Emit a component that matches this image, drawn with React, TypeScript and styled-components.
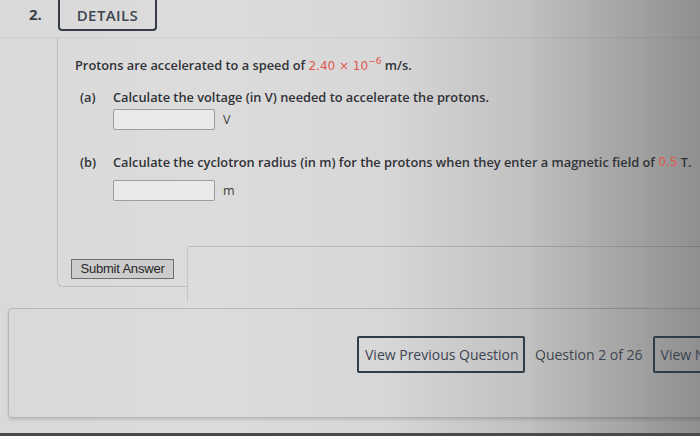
import React from 'react'
import styled, { createGlobalStyle } from 'styled-components'

const Global = createGlobalStyle`
  html, body {
    margin: 0;
    padding: 0;
  }
  body {
    width: 700px;
    height: 436px;
    overflow: hidden;
    font-family: 'Open Sans', 'Noto Sans', sans-serif;
    background: linear-gradient(
      90deg,
      #dad9d9 0%,
      #dddcdc 30%,
      #d8d7d7 55%,
      #c2c1c1 75%,
      #908f8f 100%
    );
  }
`

const Page = styled.div`
  width: 700px;
  height: 436px;
  display: flex;
  flex-direction: column;
  overflow: hidden;
  border-bottom: 3px solid #4a4a4a;
  box-sizing: border-box;
`

const Header = styled.div`
  height: 38px;
  display: flex;
  align-items: flex-start;
  border-bottom: 1px solid rgba(0, 0, 0, 0.05);
  box-sizing: border-box;
`

const Number = styled.div`
  width: 58px;
  padding: 4px 0 0 29px;
  box-sizing: border-box;
  font-size: 15px;
  font-weight: 700;
  color: #3a3f47;
`

const Tab = styled.div`
  width: 99px;
  height: 31px;
  display: flex;
  align-items: center;
  justify-content: center;
  border: 2px solid #363c45;
  border-top: none;
  border-radius: 0 0 4px 4px;
  box-sizing: border-box;
  font-size: 15px;
  font-weight: 600;
  letter-spacing: 0.4px;
  color: #3d4652;
`

const Body = styled.div`
  padding-left: 57px;
  display: flex;
  flex-direction: column;
`

const Content = styled.div`
  height: 208px;
  border-left: 1px solid rgba(0, 0, 0, 0.13);
  padding: 18px 0 0 17px;
  box-sizing: border-box;
  color: #303237;
  font-size: 12.8px;
  font-weight: 600;
`

const Prompt = styled.div`
  line-height: 18px;
  white-space: nowrap;
`

const Red = styled.span`
  color: #e0574f;
  font-family: 'DejaVu Sans', Verdana, sans-serif;
  font-weight: 400;
  font-size: 12px;
`

const Sup = styled.sup`
  font-size: 9px;
  vertical-align: 6px;
  line-height: 0;
`

const Part = styled.div<{ $top: number }>`
  margin-top: ${(p) => p.$top}px;
  padding-left: 5px;
  display: flex;
  white-space: nowrap;
  line-height: 18px;
`

const Label = styled.span`
  width: 33px;
`

const AnswerRow = styled.div<{ $top: number }>`
  margin-top: ${(p) => p.$top}px;
  padding-left: 38px;
  display: flex;
  align-items: center;
  gap: 8px;
`

const Input = styled.div`
  width: 102px;
  height: 21px;
  box-sizing: border-box;
  border: 1px solid #9c9c9c;
  border-radius: 2px;
  background: #ebeaea;
`

const Unit = styled.span`
  font-weight: 400;
  font-size: 12.5px;
  color: #3a3c40;
`

const Footer = styled.div`
  display: flex;
  align-items: flex-start;
`

const SubmitCell = styled.div`
  width: 130px;
  height: 41px;
  border-left: 1px solid rgba(0, 0, 0, 0.13);
  border-bottom: 1px solid rgba(0, 0, 0, 0.13);
  border-bottom-left-radius: 6px;
  box-sizing: border-box;
  padding: 10px 0 0 13px;
`

const SubmitButton = styled.button`
  width: 103px;
  height: 20px;
  padding: 0;
  border: 1px solid #6e6e6e;
  background: #cdcccc;
  font-family: 'Liberation Sans', Arial, sans-serif;
  font-size: 13px;
  color: #262626;
  letter-spacing: -0.2px;
`

const Feedback = styled.div`
  flex: 1;
  height: 55px;
  border-top: 1px solid rgba(0, 0, 0, 0.14);
  border-left: 1px solid rgba(0, 0, 0, 0.1);
  border-top-left-radius: 3px;
`

const NavBox = styled.div`
  margin: 6px -20px 0 8px;
  height: 110px;
  border: 1px solid rgba(0, 0, 0, 0.16);
  border-radius: 4px;
  box-shadow: 0 2px 3px rgba(0, 0, 0, 0.12);
  box-sizing: border-box;
  display: flex;
  align-items: center;
  padding: 0 0 18px 348px;
  gap: 10px;
  white-space: nowrap;
`

const NavButton = styled.div<{ $w?: number }>`
  height: 37px;
  padding: 0 6px;
  display: flex;
  align-items: center;
  border: 2px solid #2f3d48;
  border-radius: 2px;
  box-sizing: border-box;
  font-size: 14px;
  color: #3a4452;
  ${(p) => (p.$w ? `width: ${p.$w}px;` : '')}
`

const NavText = styled.span`
  font-size: 14px;
  color: #3e4550;
`

export default function App() {
  return (
    <>
      <Global />
      <Page>
        <Header>
          <Number>2.</Number>
          <Tab>DETAILS</Tab>
        </Header>
        <Body>
          <Content>
            <Prompt>
              Protons are accelerated to a speed of{' '}
              <Red>
                2.40 × 10<Sup>−6</Sup>
              </Red>{' '}
              m/s.
            </Prompt>
            <Part $top={13}>
              <Label>(a)</Label>
              Calculate the voltage (in V) needed to accelerate the protons.
            </Part>
            <AnswerRow $top={3}>
              <Input />
              <Unit>V</Unit>
            </AnswerRow>
            <Part $top={23}>
              <Label>(b)</Label>
              Calculate the cyclotron radius (in m) for the protons when they enter a magnetic
              field of&nbsp;<Red>0.5</Red>&nbsp;T.
            </Part>
            <AnswerRow $top={9}>
              <Input />
              <Unit>m</Unit>
            </AnswerRow>
          </Content>
          <Footer>
            <SubmitCell>
              <SubmitButton>Submit Answer</SubmitButton>
            </SubmitCell>
            <Feedback />
          </Footer>
        </Body>
        <NavBox>
          <NavButton $w={168}>View Previous Question</NavButton>
          <NavText>Question 2 of 26</NavText>
          <NavButton>View Next Question</NavButton>
        </NavBox>
      </Page>
    </>
  )
}
